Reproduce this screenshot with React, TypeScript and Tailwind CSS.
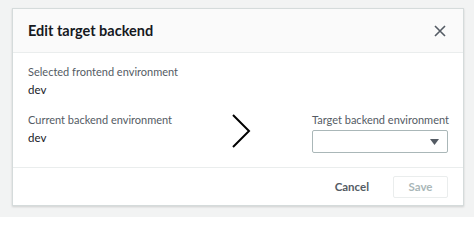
export default function App() {
  return (
    <div
      className="w-[474px] h-[217px] bg-[#f2f3f3] pt-[8px] pl-[12px] overflow-hidden"
      style={{ fontFamily: 'Lato, "Open Sans", Arial, sans-serif' }}
    >
      <div className="w-[452px] h-[198px] bg-white border border-[#d5dbdb] shadow-[0_1px_2px_rgba(0,0,0,0.15)] flex flex-col">
        <div className="h-[44px] bg-[#fafafa] border-b border-[#eaeded] flex items-center justify-between pl-[15px] pr-[17px]">
          <span className="text-[14.5px] font-bold text-[#16191f]">Edit target backend</span>
          <svg width="12" height="12" viewBox="0 0 12 12" className="text-[#545b64]">
            <path d="M1 1 L11 11 M11 1 L1 11" stroke="currentColor" strokeWidth="1.6" fill="none" />
          </svg>
        </div>
        <div className="flex-1 px-[15px] pt-[10px] border-b border-[#eaeded]">
          <div className="text-[11px] leading-[18px] text-[#545b64]">Selected frontend environment</div>
          <div className="text-[11.5px] leading-[18px] text-[#16191f]">dev</div>
          <div className="flex items-start mt-[12px]">
            <div className="w-[203px]">
              <div className="text-[11px] leading-[18px] text-[#545b64]">Current backend environment</div>
              <div className="text-[11.5px] leading-[18px] text-[#16191f]">dev</div>
            </div>
            <svg width="20" height="34" viewBox="0 0 20 34" className="mt-[3px]">
              <path d="M2 1 L18 17 L2 33" stroke="#000" strokeWidth="2" fill="none" />
            </svg>
            <div className="ml-auto w-[136px]">
              <div className="text-[11px] leading-[18px] text-[#545b64] whitespace-nowrap">Target backend environment</div>
              <div className="h-[23px] border border-[#aab7b8] rounded-[2px] flex items-center justify-end pr-[8px] mt-[1px]">
                <svg width="9" height="6" viewBox="0 0 9 6">
                  <path d="M0 0 L9 0 L4.5 6 Z" fill="#545b64" />
                </svg>
              </div>
            </div>
          </div>
        </div>
        <div className="h-[37px] flex items-center justify-end gap-[24px] pr-[15px]">
          <span className="text-[11.5px] font-bold text-[#545b64]">Cancel</span>
          <div className="w-[55px] h-[22px] border border-[#eaeded] rounded-[2px] flex items-center justify-center text-[11.5px] font-bold text-[#aab7b8]">
            Save
          </div>
        </div>
      </div>
    </div>
  )
}
